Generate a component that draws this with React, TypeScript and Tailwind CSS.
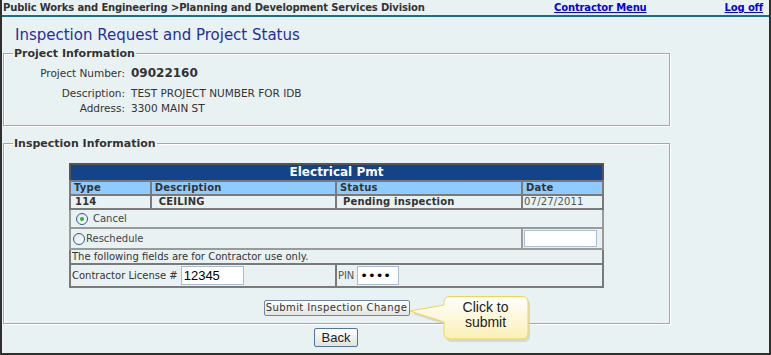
import React from 'react';

const verdana = "font-['DejaVu_Sans',Verdana,sans-serif]";

function Radio({ checked }: { checked?: boolean }) {
  return (
    <span className="inline-flex h-[12px] w-[12px] items-center justify-center rounded-full border border-[#2c5c8c] bg-gradient-to-br from-[#dfe6ee] to-white">
      {checked && <span className="h-[4px] w-[4px] rounded-full bg-[#2fb52f]" />}
    </span>
  );
}

function Callout() {
  return (
    <div className="absolute left-[142px] top-[-5px] h-[48px] w-[128px]">
      <svg width="128" height="48" viewBox="0 0 128 48" className="absolute left-0 top-0">
        <defs>
          <linearGradient id="callFill" x1="0" y1="0" x2="0" y2="1">
            <stop offset="0" stopColor="#ffffff" />
            <stop offset="1" stopColor="#fbf0b4" />
          </linearGradient>
        </defs>
        <path
          d="M46,4 H118 Q124,4 124,10 V41 Q124,47 118,47 H46 Q40,47 40,41 V30 L6,19 L40,13 V10 Q40,4 46,4 Z"
          fill="#c9c9c0"
          opacity="0.6"
        />
        <path
          d="M44,1.5 H116 Q122,1.5 122,7.5 V38 Q122,44 116,44 H44 Q38,44 38,38 V27 L4,16 L38,10 V7.5 Q38,1.5 44,1.5 Z"
          fill="url(#callFill)"
          stroke="#f2d64a"
          strokeWidth="1"
        />
      </svg>
      <div className="absolute left-[38px] top-[5px] w-[84px] text-center font-['Liberation_Sans',Arial,sans-serif] text-[14px] leading-[15px] text-[#222]">
        Click to
        <br />
        submit
      </div>
    </div>
  );
}

export default function App() {
  return (
    <div className={`h-[355px] w-[771px] overflow-hidden border-x-2 border-b-2 border-[#2f2f2f] bg-[#e9f2f3] ${verdana}`}>
      {/* Top bar */}
      <div className="flex h-[17px] items-center justify-between border-b-2 border-[#1d6d8f] pl-[1px] pr-[6px] text-[10px] font-bold tracking-[-0.15px] text-[#333]">
        <span>Public Works and Engineering &gt;Planning and Development Services Division</span>
        <div className="flex items-center">
          <a href="#" className="mr-[78px] text-[#0000ee] underline">Contractor Menu</a>
          <a href="#" className="text-[#0000ee] underline">Log off</a>
        </div>
      </div>

      <h1 className="ml-[13px] mt-[8px] text-[15px] leading-[20px] text-[#1f2fa0]">Inspection Request and Project Status</h1>

      <div className="w-[668px]">
        <fieldset className="ml-[1px] mt-[2px] h-[79px] w-[667px] border border-[#a8a8a0] px-[9px] shadow-[inset_1px_1px_0_#fff,1px_1px_0_#fff]">
          <legend className="px-[1px] text-[11px] font-bold leading-[13px] text-[#333]">Project Information</legend>
          <div className="mt-[5px] grid grid-cols-[112px_1fr] gap-x-[6px] text-[10.5px] text-[#333]">
            <div className="text-right leading-[16px]">Project Number:</div>
            <div className="text-[12px] font-bold leading-[16px]">09022160</div>
            <div className="mt-[5px] text-right leading-[15px]">Description:</div>
            <div className="mt-[5px] leading-[15px]">TEST PROJECT NUMBER FOR IDB</div>
            <div className="text-right leading-[15px]">Address:</div>
            <div className="leading-[15px]">3300 MAIN ST</div>
          </div>
        </fieldset>

        <fieldset className="ml-[1px] mt-[11px] h-[187px] w-[667px] border border-[#a8a8a0] shadow-[inset_1px_1px_0_#fff,1px_1px_0_#fff]">
          <legend className="ml-[9px] px-[1px] text-[11px] font-bold leading-[13px] text-[#333]">Inspection Information</legend>

          <table className="mx-auto mt-[13px] w-[535px] border-collapse border-2 border-[#555] text-[10px] text-[#333]">
            <colgroup>
              <col className="w-[81px]" />
              <col className="w-[186px]" />
              <col className="w-[187px]" />
              <col className="w-[81px]" />
            </colgroup>
            <tbody>
              <tr>
                <td colSpan={4} className="h-[17px] bg-[#134389] py-0 text-center text-[12px] font-bold leading-[15px] text-white">
                  Electrical Pmt
                </td>
              </tr>
              <tr className="bg-[#8fcbfd] font-bold tracking-[0.2px]">
                <td className="h-[14px] border-2 border-[#7a7a7a] px-[3px] py-0 leading-[12px]">Type</td>
                <td className="border-2 border-[#7a7a7a] px-[3px] py-0 leading-[12px]">Description</td>
                <td className="border-2 border-[#7a7a7a] px-[3px] py-0 leading-[12px]">Status</td>
                <td className="border-2 border-[#7a7a7a] px-[3px] py-0 leading-[12px]">Date</td>
              </tr>
              <tr className="font-bold tracking-[0.2px]">
                <td className="h-[14px] border-2 border-[#7a7a7a] px-[4px] py-0 leading-[12px]">114</td>
                <td className="border-2 border-[#7a7a7a] px-[7px] py-0 leading-[12px]">CEILING</td>
                <td className="border-2 border-[#7a7a7a] px-[6px] py-0 leading-[12px]">Pending inspection</td>
                <td className="border-2 border-[#7a7a7a] px-[1px] py-0 font-normal leading-[12px] text-[#555]">07/27/2011</td>
              </tr>
              <tr>
                <td colSpan={4} className="h-[19px] border-2 border-[#9a9a9a] px-[5px] py-0">
                  <label className="flex items-center gap-[5px] leading-[15px] text-[#444]">
                    <Radio checked />
                    <span>Cancel</span>
                  </label>
                </td>
              </tr>
              <tr>
                <td colSpan={3} className="h-[21px] border-2 border-[#9a9a9a] px-[2px] py-0">
                  <label className="flex items-center gap-[1px] leading-[15px] text-[#444]">
                    <Radio />
                    <span>Reschedule</span>
                  </label>
                </td>
                <td className="border-2 border-[#9a9a9a] px-[1px] py-0">
                  <input type="text" className="block h-[17px] w-[73px] border border-[#a9bdd3] bg-white" />
                </td>
              </tr>
              <tr>
                <td colSpan={4} className="h-[15px] border-2 border-[#7a7a7a] px-[1px] py-0 leading-[13px]">
                  The following fields are for Contractor use only.
                </td>
              </tr>
              <tr>
                <td colSpan={2} className="h-[23px] border-2 border-[#7a7a7a] px-[1px] py-0">
                  <div className="flex items-center gap-[3px]">
                    <span>Contractor License #</span>
                    <input
                      type="text"
                      defaultValue="12345"
                      className="h-[19px] w-[63px] border border-[#a9bdd3] bg-white px-[2px] font-['Liberation_Sans',Arial,sans-serif] text-[13px] text-black"
                    />
                  </div>
                </td>
                <td colSpan={2} className="border-2 border-[#7a7a7a] px-[1px] py-0">
                  <div className="flex items-center gap-[3px]">
                    <span className="text-[#555]">PIN</span>
                    <input
                      type="password"
                      defaultValue="1234"
                      className="h-[19px] w-[42px] border border-[#a9bdd3] bg-white px-[2px] text-[13px] text-black"
                    />
                  </div>
                </td>
              </tr>
            </tbody>
          </table>

          <div className="relative mx-auto mt-[12px] w-[146px]">
            <button className="block h-[16px] w-[146px] rounded-[2px] border border-[#6f87a3] bg-gradient-to-b from-white to-[#e4e4e0] text-[10px] leading-[14px] tracking-[0.4px] text-[#333]">
              Submit Inspection Change
            </button>
            <Callout />
          </div>
        </fieldset>

        <div className="mt-[4px] flex justify-center">
          <button className="h-[19px] w-[44px] rounded-[2px] border border-[#4f75a3] bg-gradient-to-b from-white to-[#e2e2de] font-['Liberation_Sans',Arial,sans-serif] text-[13px] leading-[17px] text-[#222]">
            Back
          </button>
        </div>
      </div>
    </div>
  );
}
